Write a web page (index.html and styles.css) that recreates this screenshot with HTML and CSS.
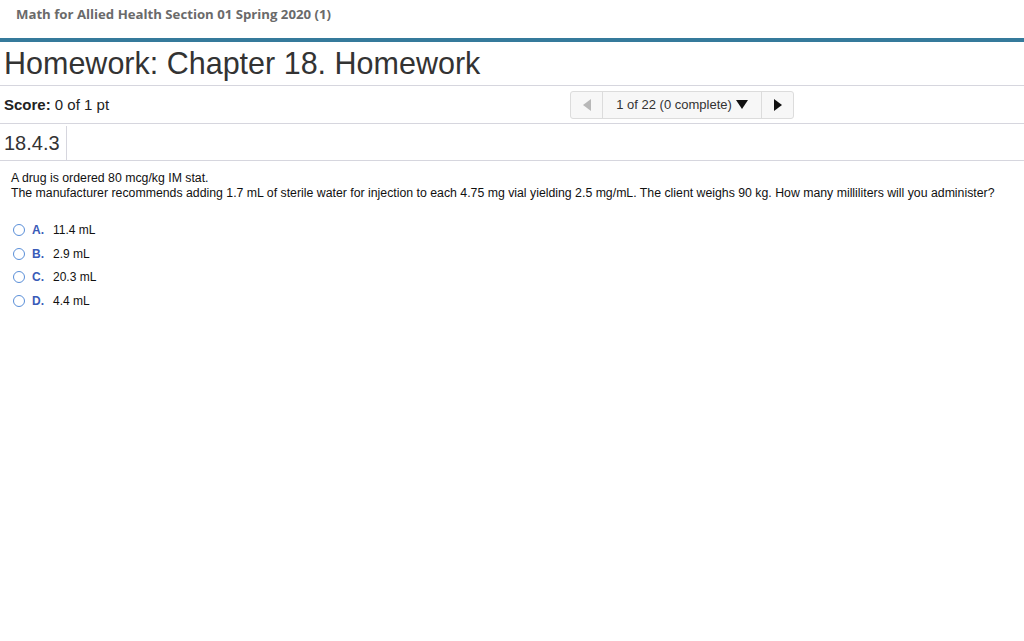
FILE: index.html
```html
<!DOCTYPE html>
<html>
<head>
<meta charset="utf-8">
<link rel="stylesheet" href="styles.css">
</head>
<body>
<div class="course">Math for Allied Health Section 01 Spring 2020 (1)</div>
<div class="bar"></div>
<h1 class="title">Homework: Chapter 18. Homework</h1>
<div class="scorerow">
  <div class="score"><b>Score:</b> 0 of 1 pt</div>
  <div class="nav">
    <div class="navbtn prev"><span class="tri-left"></span></div>
    <div class="navmid">1 of 22 (0 complete) <span class="tri-down"></span></div>
    <div class="navbtn next"><span class="tri-right"></span></div>
  </div>
</div>
<div class="qidrow"><div class="qid">18.4.3</div></div>
<div class="question">
  <p>A drug is ordered 80 mcg/kg IM stat.</p>
  <p>The manufacturer recommends adding 1.7 mL of sterile water for injection to each 4.75 mg vial yielding 2.5 mg/mL. The client weighs 90 kg. How many milliliters will you administer?</p>
</div>
<ul class="options">
  <li><span class="radio"></span><span class="letter">A.</span><span class="val">11.4 mL</span></li>
  <li><span class="radio"></span><span class="letter">B.</span><span class="val">2.9 mL</span></li>
  <li><span class="radio"></span><span class="letter">C.</span><span class="val">20.3 mL</span></li>
  <li><span class="radio"></span><span class="letter">D.</span><span class="val">4.4 mL</span></li>
</ul>
</body>
</html>
```
FILE: styles.css
```css
html, body { margin: 0; padding: 0; background: #fff; }
body { font-family: "Liberation Sans", Arial, sans-serif; color: #000; }
.course {
  font-family: "Open Sans", sans-serif;
  font-weight: 700;
  font-size: 13.2px;
  color: #6a6a6a;
  padding: 5px 0 0 16px;
  height: 33px;
  box-sizing: border-box;
  line-height: 18px;
}
.bar { height: 4px; background: #357a9b; margin-top: 5px; }
.title {
  margin: 0;
  font-weight: 400;
  font-size: 30.5px;
  color: #333;
  padding: 4px 0 0 4px;
  height: 44px;
  box-sizing: border-box;
  line-height: 34px;
  border-bottom: 1px solid #d6d6de;
}
.scorerow {
  display: flex;
  align-items: center;
  height: 38px;
  border-bottom: 1px solid #d6d6de;
  box-sizing: border-box;
}
.score { font-size: 15px; color: #222; padding-left: 4px; width: 566px; }
.score b { font-weight: 700; }
.nav {
  display: flex;
  height: 28px;
  border: 1px solid #dcdcdc;
  border-radius: 3px;
  background: #f7f7f7;
  box-sizing: border-box;
}
.navbtn { width: 31px; display: flex; align-items: center; justify-content: center; }
.prev { border-right: 1px solid #dcdcdc; }
.next { border-left: 1px solid #dcdcdc; }
.navmid {
  width: 158px;
  display: flex;
  align-items: center;
  justify-content: center;
  font-size: 13px;
  color: #333;
  gap: 4px;
}
.tri-left { width: 0; height: 0; border-top: 6px solid transparent; border-bottom: 6px solid transparent; border-right: 8px solid #b8b8b8; }
.tri-right { width: 0; height: 0; border-top: 6px solid transparent; border-bottom: 6px solid transparent; border-left: 8px solid #111; }
.tri-down { width: 0; height: 0; border-left: 6px solid transparent; border-right: 6px solid transparent; border-top: 9px solid #111; }
.qidrow {
  height: 37px;
  border-bottom: 1px solid #d6d6de;
  box-sizing: border-box;
  display: flex;
}
.qid {
  font-size: 20px;
  color: #333;
  padding: 8px 5px 0 4px;
  width: 57px;
  border-right: 1px solid #d6d6de;
  margin-top: 2px;
  line-height: 18px;
}
.question { padding: 10px 0 0 11px; font-size: 12.3px; color: #111; }
.question p { margin: 0; line-height: 15px; }
.options { list-style: none; margin: 17px 0 0; padding: 0 0 0 13px; }
.options li { display: flex; align-items: center; height: 23.7px; font-size: 12px; color: #111; }
.radio {
  width: 10px; height: 10px;
  border: 1.5px solid #5a8fd8;
  border-radius: 50%;
  margin-right: 7px;
}
.letter { color: #3a5bb8; font-weight: 700; width: 21px; }
```
